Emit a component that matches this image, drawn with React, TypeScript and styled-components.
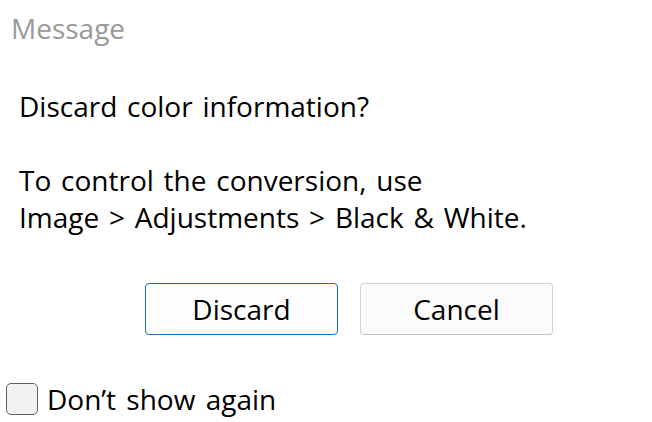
import React from "react";
import styled, { createGlobalStyle } from "styled-components";

const GlobalStyle = createGlobalStyle`
  html, body {
    margin: 0;
    padding: 0;
    background: #ffffff;
  }
  body {
    font-family: "Open Sans", "Noto Sans", sans-serif;
  }
`;

const Dialog = styled.div`
  width: 652px;
  height: 422px;
  background: #ffffff;
  display: flex;
  flex-direction: column;
  box-sizing: border-box;
`;

const Title = styled.div`
  font-size: 28px;
  line-height: 36px;
  color: #999999;
  padding: 10px 0 0 11px;
  height: 46px;
  box-sizing: border-box;
`;

const Body = styled.div`
  padding: 42px 0 0 19px;
  font-size: 28px;
  line-height: 37px;
  word-spacing: 2.5px;
  color: #000000;
`;

const Line = styled.div<{ $gap?: boolean }>`
  margin-top: ${(p) => (p.$gap ? "37px" : "0")};
  white-space: nowrap;
`;

const Buttons = styled.div`
  display: flex;
  gap: 22px;
  padding-left: 145px;
  margin-top: 47px;
`;

const Button = styled.button<{ $primary?: boolean }>`
  width: 193px;
  height: 52px;
  box-sizing: border-box;
  border-radius: 4px;
  border: 1px solid ${(p) => (p.$primary ? "#1a6fc0" : "#d2d2d2")};
  border-bottom-color: ${(p) => (p.$primary ? "#1a6fc0" : "#c4c4c4")};
  background: ${(p) => (p.$primary ? "#fdfdfd" : "#fbfbfb")};
  font-family: "Open Sans", "Noto Sans", sans-serif;
  font-size: 28px;
  color: #000000;
  padding: 0;
  display: flex;
  align-items: center;
  justify-content: center;
`;

const CheckRow = styled.label`
  display: flex;
  align-items: center;
  gap: 9px;
  padding-left: 6px;
  margin-top: 45px;
  font-size: 28px;
  word-spacing: 3px;
  color: #000000;
`;

const Box = styled.span`
  width: 32px;
  height: 32px;
  box-sizing: border-box;
  border: 1px solid #5f5f5f;
  border-radius: 5px;
  background: #f2f2f2;
`;

export default function App() {
  return (
    <>
      <GlobalStyle />
      <Dialog>
        <Title>Message</Title>
        <Body>
          <Line>Discard color information?</Line>
          <Line $gap>To control the conversion, use</Line>
          <Line>Image &gt; Adjustments &gt; Black &amp; White.</Line>
        </Body>
        <Buttons>
          <Button $primary>Discard</Button>
          <Button>Cancel</Button>
        </Buttons>
        <CheckRow>
          <Box />
          Don’t show again
        </CheckRow>
      </Dialog>
    </>
  );
}
